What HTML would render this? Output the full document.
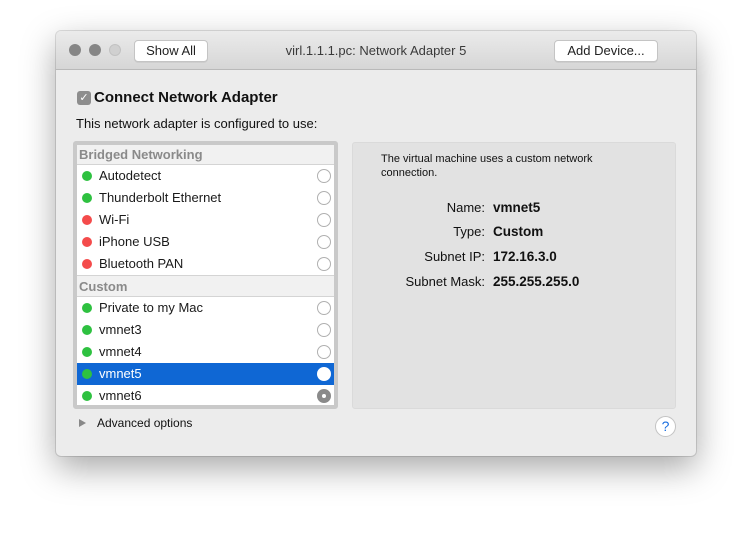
<!DOCTYPE html>
<html><head><meta charset="utf-8"><style>
*{margin:0;padding:0;box-sizing:border-box}
body{width:752px;height:536px;background:#fff;font-family:"Liberation Sans",sans-serif;position:relative;overflow:hidden}
.win{position:absolute;left:56px;top:31px;width:640px;height:425px;background:#ececec;border-radius:5px;box-shadow:0 12px 34px rgba(0,0,0,.35),0 0 0 1px rgba(0,0,0,.12)}
.tb{position:absolute;left:0;top:0;width:640px;height:39px;background:linear-gradient(#ebebeb,#d6d6d6);border-bottom:1px solid #b9b9b9;border-radius:5px 5px 0 0}
.l{position:absolute;top:13px;width:12px;height:12px;border-radius:50%}
.btn{position:absolute;top:9px;height:22px;background:#fff;border:1px solid #c4c4c4;border-radius:4px;font-size:13px;color:#222;text-align:center;line-height:20px;box-shadow:0 1px 0 rgba(0,0,0,.05)}
.title{position:absolute;top:12px;left:0;width:640px;text-align:center;font-size:13px;color:#3a3a3a}
.a{position:absolute;font-size:13px;color:#111}
.list{position:absolute;left:17px;top:110px;width:265px;height:268px;border:4px solid #c9c9c9;border-radius:3px;background:#fff;overflow:hidden}
.hd{position:absolute;left:0;width:257px;background:#f1f1f1;border-bottom:1px solid #d4d4d4;border-top:1px solid #d4d4d4;font-weight:bold;color:#8a8a8a;font-size:13px;line-height:19px;padding-left:2px}
.row{position:absolute;left:0;width:257px;height:22px;font-size:13px;color:#1a1a1a;line-height:22px;padding-left:22px}
.row .d{position:absolute;left:5px;top:6px;width:10px;height:10px;border-radius:50%}
.g{background:#2ec140}.r{background:#f44b4b}
.row .rd{position:absolute;left:240px;top:4px;width:14px;height:14px;border-radius:50%;border:1px solid #b0b0b0;background:#fff}
.sel{background:#0f67d4;color:#fff}
.sel .rd{border-color:#fff}
.pan{position:absolute;left:296px;top:111px;width:324px;height:267px;background:#e2e2e2;border-radius:3px;border:1px solid #dadada}
.k{position:absolute;font-size:13px;color:#111;text-align:right;width:200px}
.v{position:absolute;font-size:13.5px;font-weight:bold;color:#111}
</style></head><body>
<div class="win">
<div class="tb">
<div class="l" style="left:13px;background:#868686"></div>
<div class="l" style="left:33px;background:#868686"></div>
<div class="l" style="left:53px;background:#d0d0d0;border:1px solid #c2c2c2"></div>
<div class="btn" style="left:78px;width:74px">Show All</div>
<div class="title">virl.1.1.1.pc: Network Adapter 5</div>
<div class="btn" style="left:498px;width:104px">Add Device...</div>
</div>
<div style="position:absolute;left:21px;top:60px;width:14px;height:14px;background:#8d8d8d;border-radius:3px;color:#fff;font-size:11px;line-height:14px;text-align:center">✓</div>
<div class="a" style="left:38px;top:58px;font-size:15px;font-weight:bold">Connect Network Adapter</div>
<div class="a" style="left:20px;top:85px">This network adapter is configured to use:</div>
<div class="list">
<div class="hd" style="top:0;height:20px;border-top:none">Bridged Networking</div>
<div class="row" style="top:20px"><span class="d g"></span>Autodetect<span class="rd"></span></div>
<div class="row" style="top:42px"><span class="d g"></span>Thunderbolt Ethernet<span class="rd"></span></div>
<div class="row" style="top:64px"><span class="d r"></span>Wi-Fi<span class="rd"></span></div>
<div class="row" style="top:86px"><span class="d r"></span>iPhone USB<span class="rd"></span></div>
<div class="row" style="top:108px"><span class="d r"></span>Bluetooth PAN<span class="rd"></span></div>
<div class="hd" style="top:130px;height:22px;line-height:21px">Custom</div>
<div class="row" style="top:152px"><span class="d g"></span>Private to my Mac<span class="rd"></span></div>
<div class="row" style="top:174px"><span class="d g"></span>vmnet3<span class="rd"></span></div>
<div class="row" style="top:196px"><span class="d g"></span>vmnet4<span class="rd"></span></div>
<div class="row sel" style="top:218px"><span class="d g"></span>vmnet5<span class="rd"></span></div>
<div class="row" style="top:240px"><span class="d g"></span>vmnet6<span class="rd" style="background:#8a8a8a;border-color:#8a8a8a"><span style="position:absolute;left:4px;top:4px;width:4px;height:4px;border-radius:50%;background:#fff"></span></span></div>
</div>
<div style="position:absolute;left:23px;top:388px;width:0;height:0;border-left:7px solid #888;border-top:4px solid transparent;border-bottom:4px solid transparent"></div>
<div class="a" style="left:41px;top:385px;font-size:12px">Advanced options</div>
<div class="pan">
<div class="a" style="left:28px;top:9px;font-size:11px;line-height:14px">The virtual machine uses a custom network<br>connection.</div>
<div class="k" style="left:-68px;top:57px">Name:</div><div class="v" style="left:140px;top:57px">vmnet5</div>
<div class="k" style="left:-68px;top:81px">Type:</div><div class="v" style="left:140px;top:81px">Custom</div>
<div class="k" style="left:-68px;top:106px">Subnet IP:</div><div class="v" style="left:140px;top:106px">172.16.3.0</div>
<div class="k" style="left:-68px;top:131px">Subnet Mask:</div><div class="v" style="left:140px;top:131px">255.255.255.0</div>
</div>
<div style="position:absolute;left:599px;top:385px;width:21px;height:21px;border-radius:50%;background:#fff;border:1px solid #c3c3c3;color:#1a6fe0;font-size:14px;text-align:center;line-height:19px">?</div>
</div>
</body></html>
